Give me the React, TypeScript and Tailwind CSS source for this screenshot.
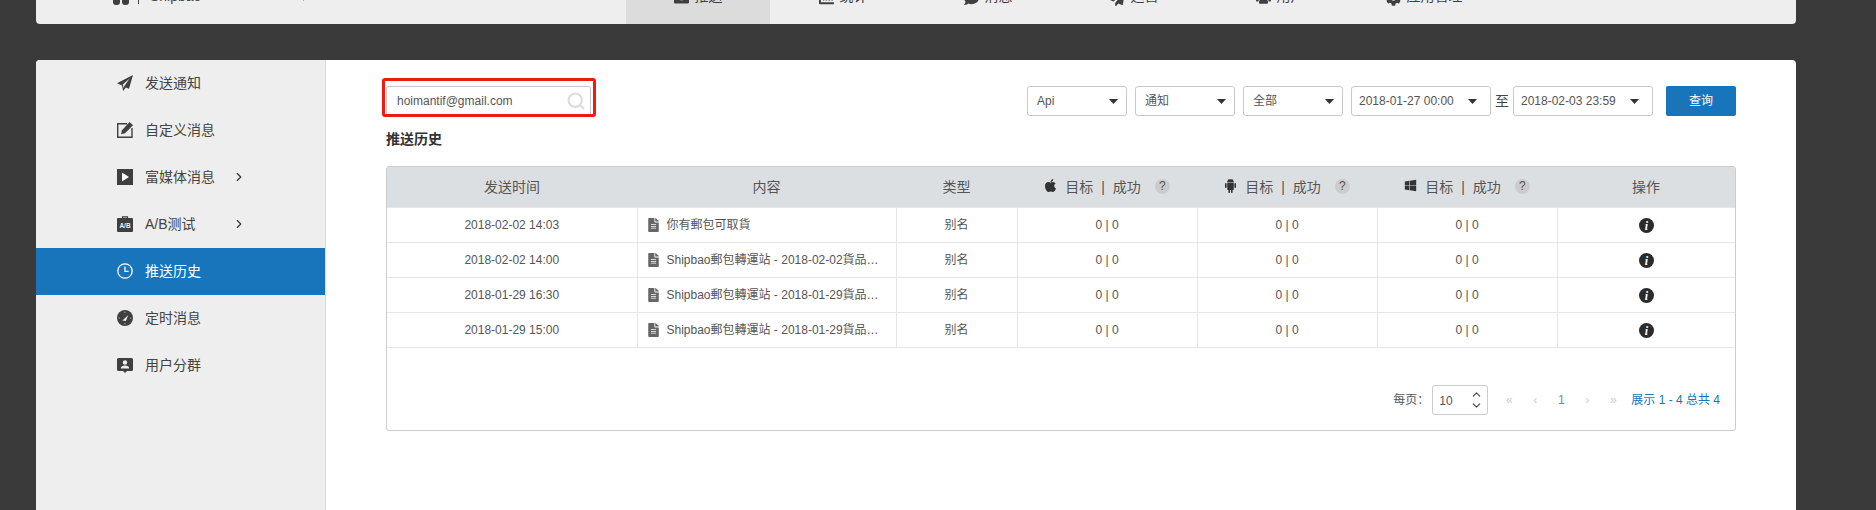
import React from "react";
import { FaApple, FaWindows, FaFileAlt, FaPaperPlane, FaChartBar, FaCommentDots, FaUsers, FaCog, FaInbox } from "react-icons/fa";
import { Search, ChevronRight, ChevronUp, ChevronDown } from "lucide-react";

const Caret = () => (
  <svg width="9" height="5" viewBox="0 0 9 5" className="shrink-0"><path d="M0 0h9L4.500 5z" fill="#333" /></svg>
);

const Box = ({ w, children }: { w: string; children: React.ReactNode }) => (
  <div className={`flex h-[30px] items-center justify-between rounded-[3px] border border-[#c8c8c8] bg-white text-xs text-[#555] ${w}`}>
    <span>{children}</span>
    <Caret />
  </div>
);

const SendIcon = () => (
  <svg width="16" height="16" viewBox="0 0 16 16"><path d="M16 0 0 8.200l5 2.200 1.200 5.600 2.600-3.600 3.200 1.400zM5.800 9.600 12.600 3.600 7.200 11.200 6.800 13.200z" fill="#3f3f3f" fillRule="evenodd" /></svg>
);
const EditIcon = () => (
  <svg width="16" height="16" viewBox="0 0 16 16"><path d="M.7 1.700h9.500M.7 1v14.300h14.300V6" fill="none" stroke="#3f3f3f" strokeWidth="1.400" /><path d="M12.600 0 16 3.200 8 11.200l-4 1 1-4z" fill="#3f3f3f" /></svg>
);
const PlayIcon = () => (
  <svg width="16" height="16" viewBox="0 0 16 16"><rect width="16" height="16" fill="#3f3f3f" /><path d="M5 3.500 12 8l-7 4.500z" fill="#fff" /></svg>
);
const AbIcon = () => (
  <svg width="16" height="16" viewBox="0 0 16 16"><path d="M5.500 2V.8h5V2" fill="none" stroke="#3f3f3f" strokeWidth="1.200" /><rect y="2" width="16" height="14" rx="1" fill="#3f3f3f" /><text x="8" y="12" fontSize="6.500" fontWeight="700" textAnchor="middle" fill="#eee" fontFamily="Liberation Sans">A/B</text></svg>
);
const ClockIcon = () => (
  <svg width="16" height="16" viewBox="0 0 16 16"><circle cx="8" cy="8" r="7.200" fill="none" stroke="#fff" strokeWidth="1.300" /><path d="M8 3.600V8.400h3.600" fill="none" stroke="#fff" strokeWidth="1.300" /></svg>
);
const TimerIcon = () => (
  <svg width="16" height="16" viewBox="0 0 16 16"><circle cx="8" cy="8" r="8" fill="#3f3f3f" /><path d="M5.400 10.600 11.400 5 8.800 11z" fill="#eee" /><circle cx="8" cy="2.200" r=".8" fill="#999" /><circle cx="2.200" cy="8" r=".8" fill="#999" /><circle cx="13.800" cy="8" r=".8" fill="#999" /><circle cx="8" cy="13.800" r=".8" fill="#999" /></svg>
);
const GroupIcon = () => (
  <svg width="16" height="16" viewBox="0 0 16 16"><path d="M1.500 1h13A1.500 1.500 0 0 1 16 2.500v10a1.500 1.500 0 0 1-1.500 1.500H10l-2 2-2-2H1.500A1.500 1.500 0 0 1 0 12.500v-10A1.500 1.500 0 0 1 1.500 1z" fill="#3f3f3f" /><circle cx="8" cy="5.500" r="2.200" fill="#eee" /><path d="M3.800 11.500c0-2.200 2-3 4.200-3s4.200.8 4.200 3z" fill="#eee" /></svg>
);
const AndroidIcon = () => (
  <svg width="11" height="15" viewBox="0 0 11 15">
    <path d="M2.200 4.500a3.300 3.300 0 0 1 6.600 0z" fill="#333" />
    <path d="M3.500 1 4.200 2.200M7.500 1 6.800 2.200" stroke="#333" strokeWidth=".6" />
    <path d="M2.200 5h6.600v6.200a.8.8 0 0 1-.8.8H3a.8.8 0 0 1-.8-.8z" fill="#333" />
    <rect x="0" y="5" width="1.600" height="5" rx=".8" fill="#333" />
    <rect x="9.400" y="5" width="1.600" height="5" rx=".8" fill="#333" />
    <rect x="3.400" y="11" width="1.600" height="4" rx=".8" fill="#333" />
    <rect x="6" y="11" width="1.600" height="4" rx=".8" fill="#333" />
  </svg>
);
const InfoIcon = () => (
  <svg width="15" height="15" viewBox="0 0 15 15" className="mx-auto">
    <circle cx="7.500" cy="7.500" r="7.500" fill="#2b2b2b" />
    <text x="7.500" y="11.800" fontSize="12" fontWeight="700" fontStyle="italic" textAnchor="middle" fill="#fff" fontFamily="Liberation Serif">i</text>
  </svg>
);

const menu = [
  { icon: <SendIcon />, label: "发送通知" },
  { icon: <EditIcon />, label: "自定义消息" },
  { icon: <PlayIcon />, label: "富媒体消息", arrow: true },
  { icon: <AbIcon />, label: "A/B测试", arrow: true },
  { icon: <ClockIcon />, label: "推送历史", active: true },
  { icon: <TimerIcon />, label: "定时消息" },
  { icon: <GroupIcon />, label: "用户分群" },
];

const tabs = [
  { icon: <FaInbox size={15} />, label: "推送", w: "w-[144px]", active: true },
  { icon: <FaChartBar size={15} />, label: "统计", w: "w-[146px]" },
  { icon: <FaCommentDots size={15} />, label: "消息", w: "w-[144px]" },
  { icon: <FaPaperPlane size={15} />, label: "运营", w: "w-[148px]" },
  { icon: <FaUsers size={15} />, label: "用户", w: "w-[144px]" },
  { icon: <FaCog size={15} />, label: "应用管理", w: "w-[144px]" },
];

const rows = [
  { time: "2018-02-02 14:03", content: "你有郵包可取貨" },
  { time: "2018-02-02 14:00", content: "Shipbao郵包轉運站 - 2018-02-02貨品到達通知信息" },
  { time: "2018-01-29 16:30", content: "Shipbao郵包轉運站 - 2018-01-29貨品到達通知信息" },
  { time: "2018-01-29 15:00", content: "Shipbao郵包轉運站 - 2018-01-29貨品到達通知信息" },
];

const Target = ({ icon }: { icon: React.ReactNode }) => (
  <div className="flex items-center justify-center font-normal">
    <span className="mr-[8px] flex w-[13px] justify-center -mt-[3px] text-[#333]">{icon}</span>
    <span>目标</span>
    <span className="mx-[8px]">|</span>
    <span>成功</span>
    <span className="ml-[14px] flex h-[15px] w-[15px] items-center justify-center rounded-full bg-[#ccc] text-[12px] text-[#555]">?</span>
  </div>
);

const th = "h-[40px] border-0 text-center text-sm font-normal text-[#555]";
const td = "h-[35px] border border-[#e6e6e6] px-[10px] pt-[1px] text-center text-xs text-[#555] first:border-l-0 last:border-r-0";

export default function App() {
  return (
    <div className="h-[510px] w-full overflow-hidden bg-[#3a3a3a] pl-[36px] pr-[80px] [font-family:'Liberation_Sans','Noto_Sans_CJK_SC',sans-serif]">
      <header className="flex h-[24px] rounded-b-[4px] bg-[#eee]">
        <div className="flex w-[590px] items-end pl-[77px] text-[#444]">
          <span className="mb-[19px] flex gap-[2px]">
            <span className="h-[16px] w-[7px] rounded-[3px] bg-[#3f3f3f]" />
            <span className="h-[16px] w-[7px] rounded-[3px] bg-[#3f3f3f]" />
          </span>
          <span className="mb-[20px] ml-[9px] h-[14px] w-px bg-[#444]" />
          <span className="mb-[21px] ml-[11px] text-sm leading-[14px]">Shipbao</span>
          <ChevronRight size={12} className="mb-[21px] ml-[98px]" />
        </div>
        {tabs.map((t) => (
          <div key={t.label} className={`flex items-end justify-center gap-[6px] text-[#3f3f3f] ${t.w} ${t.active ? "bg-[#dcdcdc]" : ""}`}>
            <span className="mb-[18px]">{t.icon}</span>
            <span className="mb-[21px] text-sm leading-[14px]">{t.label}</span>
          </div>
        ))}
      </header>

      <div className="mt-[36px] flex h-[450px] overflow-hidden rounded-t-[4px] bg-white">
        <aside className="w-[290px] shrink-0 border-r border-[#ddd] bg-[#eee]">
          {menu.map((m) => (
            <div key={m.label} className={`flex h-[47px] items-center pb-[2px] pl-[81px] text-sm ${m.active ? "bg-[#1875bb] text-white" : "text-[#444]"}`}>
              <span className="mr-[12px] flex w-[16px] justify-center">{m.icon}</span>
              <span className="w-[87px]">{m.label}</span>
              {m.arrow && <ChevronRight size={14} strokeWidth={2} className="text-[#333]" />}
            </div>
          ))}
        </aside>

        <main className="flex-1 pl-[60px] pr-[60px] pt-[26px]">
          <div className="flex h-[30px] items-center justify-between">
            <div className="relative">
              <div className="flex h-[30px] w-[205px] items-center justify-between rounded-[2px] border border-[#c8c8c8] pl-[10px] pr-[4px] text-xs text-[#555]">
                <span>hoimantif@gmail.com</span>
                <Search size={20} strokeWidth={2.600} className="text-[#ddd]" />
              </div>
              <div className="absolute -left-[4px] -top-[8px] h-[39px] w-[214px] rounded-[3px] border-[3px] border-[#f01b10]" />
            </div>
            <div className="flex items-center">
              <div className="flex gap-[8px]">
                <Box w="w-[100px] pl-[9px] pr-[8px]">Api</Box>
                <Box w="w-[100px] pl-[9px] pr-[8px]">通知</Box>
                <Box w="w-[100px] pl-[9px] pr-[8px]">全部</Box>
                <Box w="w-[140px] pl-[7px] pr-[13px]">2018-01-27 00:00</Box>
              </div>
              <span className="w-[22px] text-center text-sm text-[#444]">至</span>
              <Box w="w-[140px] pl-[7px] pr-[13px]">2018-02-03 23:59</Box>
              <button className="ml-[13px] h-[30px] w-[70px] rounded-[2px] bg-[#1875bb] text-xs text-white">查询</button>
            </div>
          </div>

          <h2 className="mt-[15px] h-[35px] text-sm font-bold leading-[16px] text-[#333]">推送历史</h2>

          <div className="h-[265px] rounded-[3px] border border-[#ccc]">
            <table className="w-full table-fixed border-collapse">
              <colgroup>
                <col className="w-[250px]" />
                <col className="w-[259px]" />
                <col className="w-[121px]" />
                <col className="w-[180px]" />
                <col className="w-[180px]" />
                <col className="w-[180px]" />
                <col />
              </colgroup>
              <thead className="bg-[#dcdfe2]">
                <tr>
                  <th className={th}>发送时间</th>
                  <th className={th}>内容</th>
                  <th className={th}>类型</th>
                  <th className={th}><Target icon={<FaApple size={15} />} /></th>
                  <th className={th}><Target icon={<AndroidIcon />} /></th>
                  <th className={th}><Target icon={<FaWindows size={13} />} /></th>
                  <th className={th}>操作</th>
                </tr>
              </thead>
              <tbody>
                {rows.map((r) => (
                  <tr key={r.time}>
                    <td className={td}>{r.time}</td>
                    <td className={td}>
                      <div className="flex items-center">
                        <FaFileAlt className="mr-[8px] h-[14px] w-[11px] shrink-0 text-[#666]" />
                        <span className="truncate">{r.content}</span>
                      </div>
                    </td>
                    <td className={td}>别名</td>
                    <td className={td}>0 | 0</td>
                    <td className={td}>0 | 0</td>
                    <td className={td}>0 | 0</td>
                    <td className={td}>
                      <InfoIcon />
                    </td>
                  </tr>
                ))}
              </tbody>
            </table>

            <div className="mt-[37px] flex items-center justify-end pr-[15px] text-xs">
              <span className="text-[#555]">每页：</span>
              <div className="ml-[3px] flex h-[30px] w-[56px] items-center justify-between rounded-[3px] border border-[#ccc] pl-[6px] pr-[4px] text-[#555]">
                <span className="pt-[2px]">10</span>
                <span className="flex flex-col text-[#444]">
                  <ChevronUp size={13} className="-mb-[2px]" />
                  <ChevronDown size={13} />
                </span>
              </div>
              <div className="ml-[8px] flex w-[130px] justify-between px-[4px] text-center text-[#ccc]">
                <span className="w-[18px]">«</span>
                <span className="w-[18px]">‹</span>
                <span className="w-[18px] text-[#4a94cc]">1</span>
                <span className="w-[18px]">›</span>
                <span className="w-[18px]">»</span>
              </div>
              <span className="ml-[5px] text-[#1875bb]">展示 1 - 4 总共 4</span>
            </div>
          </div>
        </main>
      </div>
    </div>
  );
}
